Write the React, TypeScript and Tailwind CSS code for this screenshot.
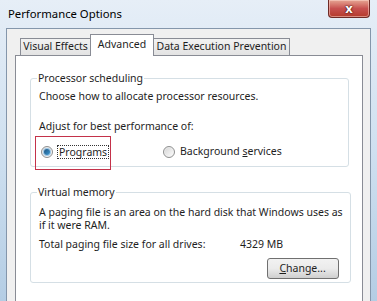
import React from 'react';

const font = { fontFamily: '"Noto Sans", "Open Sans", sans-serif' };

function Radio({ checked }: { checked?: boolean }) {
  return (
    <span className="relative inline-flex h-[12px] w-[12px] shrink-0 items-center justify-center rounded-full border border-[#8e8f8f] bg-gradient-to-br from-[#e6e6e6] to-[#f8f8f8]">
      <span className="h-[8px] w-[8px] rounded-full bg-gradient-to-br from-[#d8d8d8] to-[#fafafa]" />
      {checked && (
        <span className="absolute h-[6px] w-[6px] rounded-full bg-gradient-to-br from-[#1c5380] to-[#3f9ad4] ring-1 ring-[#9cc7e7]" />
      )}
    </span>
  );
}

function GroupBox({ title, className, children }: { title: string; className?: string; children: React.ReactNode }) {
  return (
    <fieldset className={`rounded-[3px] border border-[#d5dfe5] px-[7px] ${className ?? ''}`}>
      <legend className="ml-[-1px] px-[1px] text-[10.5px] leading-[12px] text-[#1e1e1e]">{title}</legend>
      {children}
    </fieldset>
  );
}

export default function App() {
  return (
    <div
      className="flex h-[301px] w-[377px] flex-col overflow-hidden bg-gradient-to-b from-[#e6eef7] via-[#cfe0f0] to-[#b4cde4] text-[#1e1e1e]"
      style={font}
    >
      {/* Title bar */}
      <div className="flex h-[28px] shrink-0 items-start justify-between">
        <span className="pl-[8px] pt-[6px] text-[11.3px] leading-[15px] text-black">Performance Options</span>
        <button className="mr-[7px] flex h-[18px] w-[42px] items-center justify-center rounded-b-[4px] border border-t-0 border-[#6e2a26] bg-gradient-to-b from-[#e5a594] via-[#c75050] to-[#b43a2a] shadow-[inset_0_0_0_1px_rgba(255,220,210,0.5)]">
          <span className="text-[13px] font-bold leading-none text-white [text-shadow:0_0_2px_#3a0a06,0_0_1px_#3a0a06]">x</span>
        </button>
      </div>

      {/* Client area */}
      <div className="mx-[6px] flex flex-1 flex-col border border-b-0 border-[#8496ab] bg-[#f0f0f0] pl-[8px] pr-[7px] pt-[5px]">
        {/* Tabs */}
        <div className="flex h-[21px] items-end pl-[5px] text-[10.5px]">
          <div className="-mr-[1px] flex h-[17px] w-[71px] items-center justify-center border border-b-0 border-[#898c95] bg-gradient-to-b from-[#f2f2f2] to-[#e3e3e3]">
            Visual Effects
          </div>
          <div className="relative z-10 -mb-[1px] flex h-[22px] w-[64px] items-center justify-center border border-b-0 border-[#898c95] bg-white pb-[2px]">
            Advanced
          </div>
          <div className="-ml-[1px] flex h-[17px] w-[137px] items-center justify-center border border-b-0 border-[#898c95] bg-gradient-to-b from-[#f2f2f2] to-[#e3e3e3]">
            Data Execution Prevention
          </div>
        </div>

        {/* Tab page */}
        <div className="flex flex-1 flex-col border border-b-0 border-[#898c95] bg-white pl-[14px] pr-[13px] pt-[16px] text-[10.5px]">
          <GroupBox title="Processor scheduling" className="h-[95px]">
            <div className="pl-[1px] pt-[6px] leading-[13px]">Choose how to allocate processor resources.</div>
            <div className="pl-[1px] pt-[17px] leading-[13px]">Adjust for best performance of:</div>
            <div className="-ml-[3px] mt-[3px] flex items-start">
              <div className="flex h-[34px] w-[76px] items-start gap-[4px] border border-[#c4324a] pl-[5px] pt-[9px]">
                <Radio checked />
                <span className="-mt-[1px] border border-dotted border-[#333] px-[1px] leading-[12px]">Programs</span>
              </div>
              <div className="ml-[52px] flex items-center gap-[5px] pt-[9px]">
                <Radio />
                <span className="leading-[13px]">
                  Background <span className="underline">s</span>ervices
                </span>
              </div>
            </div>
          </GroupBox>

          <GroupBox title="Virtual memory" className="mt-[19px] h-[97px]">
            <div className="whitespace-nowrap pl-[1px] pt-[8px] leading-[13px]">
              A paging file is an area on the hard disk that Windows uses as
              <br />
              if it were RAM.
            </div>
            <div className="flex pl-[1px] pt-[6px] leading-[13px]">
              <span className="w-[201px]">Total paging file size for all drives:</span>
              <span>4329 MB</span>
            </div>
            <div className="flex justify-end pr-[4px] pt-[7px]">
              <button className="flex h-[21px] w-[72px] items-center justify-center rounded-[3px] border border-[#707070] bg-gradient-to-b from-[#f2f2f2] via-[#ebebeb] to-[#cfcfcf] text-[10.5px] leading-none">
                <span>
                  <span className="underline">C</span>hange...
                </span>
              </button>
            </div>
          </GroupBox>
        </div>
      </div>
    </div>
  );
}
